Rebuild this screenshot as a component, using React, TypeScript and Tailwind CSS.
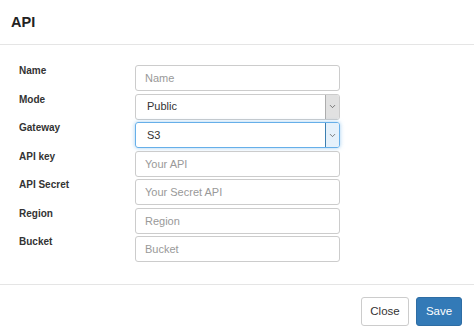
import { ChevronDown } from "lucide-react";

const fields = [
  { label: "Name", placeholder: "Name" },
  { label: "Mode", value: "Public", select: true },
  { label: "Gateway", value: "S3", select: true, focus: true },
  { label: "API key", placeholder: "Your API" },
  { label: "API Secret", placeholder: "Your Secret API" },
  { label: "Region", placeholder: "Region" },
  { label: "Bucket", placeholder: "Bucket" },
];

const App = () => {
  return (
    <div
      className="w-[474px] h-[336px] bg-white flex flex-col text-[#333]"
      style={{ fontFamily: '"Liberation Sans", Arial, sans-serif' }}
    >
      {/* Header */}
      <div className="h-[45px] border-b border-[#e5e5e5] px-[11px] pt-[14px]">
        <h1 className="text-[14.5px] font-bold leading-[16px] text-[#222]">API</h1>
      </div>

      {/* Body */}
      <div className="pl-[19px] pt-[20px] h-[240px] border-b border-[#e5e5e5] flex flex-col gap-[2.5px]">
        {fields.map((f) => (
          <div key={f.label} className="flex h-[26px]">
            <label className="w-[116px] text-[10px] font-bold leading-[12px] text-[#333]">
              {f.label}
            </label>
            {f.select ? (
              <div
                className={
                  "w-[205px] h-[26px] rounded-[3px] border flex items-center " +
                  (f.focus
                    ? "border-[#66afe9] shadow-[0_0_4px_rgba(102,175,233,0.6)]"
                    : "border-[#ccc]")
                }
              >
                <span className="flex-1 pl-[11px] text-[11px] text-[#333]">{f.value}</span>
                <span
                  className={
                    "w-[14px] h-full flex items-center justify-center border-l rounded-r-[2px] " +
                    (f.focus ? "bg-[#e5f1fb] border-[#3c7fb1]" : "bg-[#e1e1e1] border-[#adadad]")
                  }
                >
                  <ChevronDown size={9} strokeWidth={2} className="text-[#555]" />
                </span>
              </div>
            ) : (
              <input
                placeholder={f.placeholder}
                className="w-[205px] h-[26px] rounded-[3px] border border-[#ccc] px-[9px] text-[11px] placeholder:text-[#999] outline-none"
              />
            )}
          </div>
        ))}
      </div>

      {/* Footer */}
      <div className="flex justify-end gap-[7px] pt-[12px] pr-[12px]">
        <button className="h-[29px] w-[48px] rounded-[3px] border border-[#ccc] bg-white text-[11.5px] text-[#333]">
          Close
        </button>
        <button className="h-[29px] w-[46px] rounded-[3px] border border-[#2e6da4] bg-[#337ab7] text-[11.5px] text-white">
          Save
        </button>
      </div>
    </div>
  );
};

export default App;
